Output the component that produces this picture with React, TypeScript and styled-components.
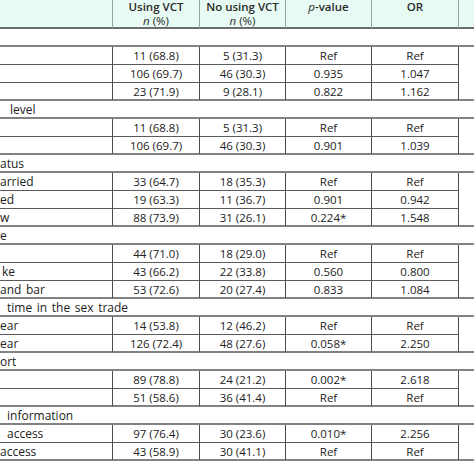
import React from "react";
import styled, { createGlobalStyle } from "styled-components";

const Global = createGlobalStyle`
  html, body { margin: 0; padding: 0; background: #ffffff; }
  #root { width: 474px; height: 474px; overflow: hidden; }
`;

const COLS = "113px 87px 86px 86px 87px 1fr";

const Table = styled.div`
  display: flex;
  flex-direction: column;
  width: 474px;
  font-family: "Open Sans", "Noto Sans", "Liberation Sans", sans-serif;
  font-size: 11.5px;
  color: #222222;
`;

const HeaderRow = styled.div`
  display: grid;
  grid-template-columns: ${COLS};
  height: 29px;
  box-sizing: border-box;
  background: #e7faf3;
  border-bottom: 2px solid #6c6c6c;
`;

const HeaderCell = styled.div<{ $edge?: boolean }>`
  border-right: ${(p) => (p.$edge ? "none" : "1px solid #93a39d")};
  text-align: center;
  line-height: 14px;
  font-size: 11.5px;
  font-weight: 600;
  color: #2a2a2a;
  white-space: nowrap;
`;

const Em = styled.span`
  font-style: italic;
  font-weight: 400;
`;

const Sub = styled.span`
  font-weight: 400;
`;

const GroupRow = styled.div<{ $indent: number }>`
  height: 18px;
  box-sizing: border-box;
  border-bottom: 2px solid #828282;
  display: flex;
  align-items: center;
  padding-left: ${(p) => p.$indent}px;
  font-size: 12px;
  word-spacing: 1.5px;
  white-space: nowrap;
  overflow: hidden;
`;

const DataRow = styled.div`
  display: grid;
  grid-template-columns: ${COLS};
  height: 18px;
`;

const Cell = styled.div<{ $last?: boolean }>`
  box-sizing: border-box;
  display: flex;
  align-items: center;
  justify-content: center;
  border-right: 1px solid #4d4d4d;
  border-bottom: ${(p) => (p.$last ? "2px solid #828282" : "1px solid #5a5a5a")};
  white-space: nowrap;
`;

const LabelCell = styled(Cell)`
  justify-content: flex-start;
  overflow: hidden;
  font-size: 12px;
  word-spacing: 1.5px;
`;

const LabelText = styled.span<{ $shift: number }>`
  margin-left: ${(p) => p.$shift}px;
`;

const SpanCell = styled.div<{ $last?: boolean }>`
  box-sizing: border-box;
  border-bottom: ${(p) => (p.$last ? "2px solid #828282" : "none")};
`;

type Row = { label: string; shift: number; a: string; b: string; p: string; or: string };
type Group = { title: string; indent: number; rows: Row[] };

const groups: Group[] = [
  {
    title: "",
    indent: 0,
    rows: [
      { label: "", shift: 0, a: "11 (68.8)", b: "5 (31.3)", p: "Ref", or: "Ref" },
      { label: "", shift: 0, a: "106 (69.7)", b: "46 (30.3)", p: "0.935", or: "1.047" },
      { label: "", shift: 0, a: "23 (71.9)", b: "9 (28.1)", p: "0.822", or: "1.162" },
    ],
  },
  {
    title: "level",
    indent: 10,
    rows: [
      { label: "", shift: 0, a: "11 (68.8)", b: "5 (31.3)", p: "Ref", or: "Ref" },
      { label: "", shift: 0, a: "106 (69.7)", b: "46 (30.3)", p: "0.901", or: "1.039" },
    ],
  },
  {
    title: "atus",
    indent: 0,
    rows: [
      { label: "arried", shift: 0, a: "33 (64.7)", b: "18 (35.3)", p: "Ref", or: "Ref" },
      { label: "ed", shift: 0, a: "19 (63.3)", b: "11 (36.7)", p: "0.901", or: "0.942" },
      { label: "w", shift: 0, a: "88 (73.9)", b: "31 (26.1)", p: "0.224*", or: "1.548" },
    ],
  },
  {
    title: "e",
    indent: 0,
    rows: [
      { label: "", shift: 0, a: "44 (71.0)", b: "18 (29.0)", p: "Ref", or: "Ref" },
      { label: "ke", shift: 2, a: "43 (66.2)", b: "22 (33.8)", p: "0.560", or: "0.800" },
      { label: "and bar", shift: 0, a: "53 (72.6)", b: "20 (27.4)", p: "0.833", or: "1.084" },
    ],
  },
  {
    title: "time in the sex trade",
    indent: 7,
    rows: [
      { label: "ear", shift: 0, a: "14 (53.8)", b: "12 (46.2)", p: "Ref", or: "Ref" },
      { label: "ear", shift: 0, a: "126 (72.4)", b: "48 (27.6)", p: "0.058*", or: "2.250" },
    ],
  },
  {
    title: "ort",
    indent: 0,
    rows: [
      { label: "", shift: 0, a: "89 (78.8)", b: "24 (21.2)", p: "0.002*", or: "2.618" },
      { label: "", shift: 0, a: "51 (58.6)", b: "36 (41.4)", p: "Ref", or: "Ref" },
    ],
  },
  {
    title: "information",
    indent: 7,
    rows: [
      { label: "access", shift: 7, a: "97 (76.4)", b: "30 (23.6)", p: "0.010*", or: "2.256" },
      { label: "access", shift: 0, a: "43 (58.9)", b: "30 (41.1)", p: "Ref", or: "Ref" },
    ],
  },
];

export default function App() {
  return (
    <>
      <Global />
      <Table>
        <HeaderRow>
          <HeaderCell />
          <HeaderCell>
            Using VCT
            <br />
            <Em>n</Em> <Sub>(%)</Sub>
          </HeaderCell>
          <HeaderCell>
            No using VCT
            <br />
            <Em>n</Em> <Sub>(%)</Sub>
          </HeaderCell>
          <HeaderCell>
            <Em>p</Em>-value
          </HeaderCell>
          <HeaderCell>OR</HeaderCell>
          <HeaderCell $edge />
        </HeaderRow>
        {groups.map((g, gi) => (
          <React.Fragment key={gi}>
            <GroupRow $indent={g.indent}>{g.title}</GroupRow>
            {g.rows.map((r, ri) => {
              const last = ri === g.rows.length - 1;
              return (
                <DataRow key={ri}>
                  <LabelCell $last={last}>
                    <LabelText $shift={r.shift}>{r.label}</LabelText>
                  </LabelCell>
                  <Cell $last={last}>{r.a}</Cell>
                  <Cell $last={last}>{r.b}</Cell>
                  <Cell $last={last}>{r.p}</Cell>
                  <Cell $last={last}>{r.or}</Cell>
                  <SpanCell $last={last} />
                </DataRow>
              );
            })}
          </React.Fragment>
        ))}
      </Table>
    </>
  );
}
